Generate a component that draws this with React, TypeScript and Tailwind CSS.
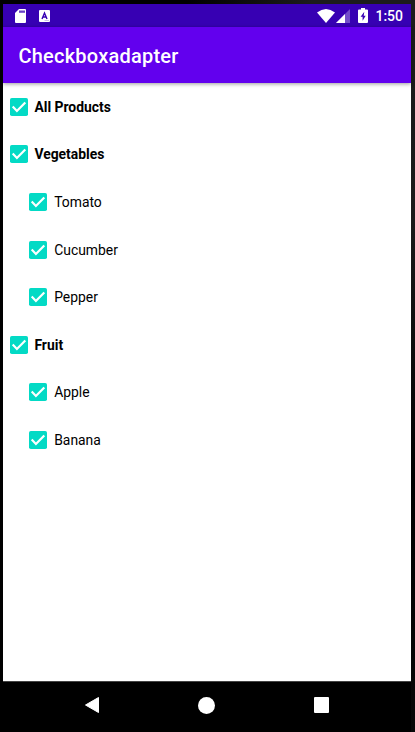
import React, { useState } from "react";

interface Item {
  id: number;
  label: string;
  level: "group" | "child";
}

const items: Item[] = [
  { id: 1, label: "All Products", level: "group" },
  { id: 2, label: "Vegetables", level: "group" },
  { id: 3, label: "Tomato", level: "child" },
  { id: 4, label: "Cucumber", level: "child" },
  { id: 5, label: "Pepper", level: "child" },
  { id: 6, label: "Fruit", level: "group" },
  { id: 7, label: "Apple", level: "child" },
  { id: 8, label: "Banana", level: "child" },
];

const StatusBar: React.FC = () => (
  <div className="flex h-[23px] shrink-0 items-center bg-[#3700b3] pl-3 pr-2 text-white">
    <svg width="11" height="14" viewBox="0 0 11 14" className="block">
      <path d="M4 0h6a1 1 0 0 1 1 1v12a1 1 0 0 1-1 1H1a1 1 0 0 1-1-1V4z" fill="currentColor" />
      <path d="M4 1.5h6v2.3H4z" fill="#3700b3" opacity="0.75" />
    </svg>
    <svg width="11" height="12" viewBox="0 0 11 12" className="ml-[13px] block">
      <rect width="11" height="12" rx="1" fill="currentColor" />
      <path d="M3 9l2.5-6L8 9M3.9 7h3.2" fill="none" stroke="#3700b3" strokeWidth="1.4" />
      <path d="M5.5 10.5h4.5" stroke="#3700b3" strokeWidth="0.7" opacity="0.35" />
    </svg>
    <svg width="18" height="14" viewBox="0 0 18 14" className="ml-auto block">
      <path d="M0 3.5Q9-3.5 18 3.5L9 14z" fill="currentColor" />
    </svg>
    <svg width="14" height="14" viewBox="0 0 14 14" className="ml-px block">
      <path d="M14 0v14H0z" fill="currentColor" opacity="0.3" />
      <path d="M9 5v9H0z" fill="currentColor" />
    </svg>
    <svg width="10" height="15" viewBox="0 0 10 15" className="ml-2 block">
      <path d="M3 1.5V0h4v1.5h2a1 1 0 0 1 1 1V14a1 1 0 0 1-1 1H1a1 1 0 0 1-1-1V2.5a1 1 0 0 1 1-1z" fill="currentColor" />
      <path d="M6.3 3.8L2.6 8.7h2v4L7.7 7.7H5.7z" fill="#3700b3" />
    </svg>
    <span className="ml-[7px] pt-px text-[14px] font-medium leading-none">1:50</span>
  </div>
);

interface CheckRowProps {
  item: Item;
  checked: boolean;
  onToggle: (id: number) => void;
}

const CheckRow: React.FC<CheckRowProps> = ({ item, checked, onToggle }) => (
  <label
    className={`flex h-[47.6px] items-center gap-[6.8px] ${
      item.level === "group" ? "pl-[6.6px] font-bold" : "pl-[26.4px]"
    }`}
  >
    <input
      type="checkbox"
      checked={checked}
      onChange={() => onToggle(item.id)}
      className="sr-only"
    />
    <svg width="18" height="18" viewBox="0 0 18 18" className="block shrink-0">
      {checked ? (
        <>
          <rect width="18" height="18" rx="1.8" fill="#03dac5" />
          <path d="M2.7 8.6L6.9 12.9L15.3 4.4" fill="none" stroke="white" strokeWidth="2.2" />
        </>
      ) : (
        <rect x="1" y="1" width="16" height="16" rx="1" fill="none" stroke="#757575" strokeWidth="2" />
      )}
    </svg>
    <span className="pt-[2px] text-[13.9px] leading-none text-black">{item.label}</span>
  </label>
);

const NavBar: React.FC = () => (
  <div className="flex h-12 shrink-0 items-center border-t border-[#444444] bg-black pb-px pl-[81px] text-white">
    <svg width="16" height="18" viewBox="0 0 16 18" className="block">
      <path d="M14.5 1.5v15L1.5 9z" fill="currentColor" stroke="currentColor" strokeWidth="1" strokeLinejoin="round" />
    </svg>
    <div className="ml-[98px] h-[17px] w-[17px] rounded-full bg-white" />
    <div className="ml-[99px] h-[16px] w-[15px] rounded-[1px] bg-white" />
  </div>
);

const App: React.FC = () => {
  const [selected, setSelected] = useState<number[]>(items.map((item) => item.id));

  const handleToggle = (id: number) => {
    setSelected((prev) =>
      prev.includes(id) ? prev.filter((value) => value !== id) : [...prev, id]
    );
  };

  return (
    <div className="flex h-[732px] w-[415px] flex-col overflow-hidden bg-black font-[Roboto,sans-serif]">
      {/* device bezel */}
      <div className="h-1 shrink-0 bg-[linear-gradient(to_right,#000_45%,#1c1c1c_75%)]" />
      <div className="flex flex-1 bg-[linear-gradient(to_bottom,#1c1c1c,#1a1a1a_30%,#000_65%,#080808)] bg-[length:4px_100%] bg-right bg-no-repeat pl-[3px] pr-1">
        <div className="flex h-[725px] w-full flex-col bg-white">
          <StatusBar />
          <header className="z-10 flex h-14 shrink-0 items-center bg-[#6200ee] pl-[15.5px] pt-0.5 shadow-[0_1px_4px_rgba(0,0,0,0.4)]">
            <h1 className="text-[20px] font-medium leading-none tracking-[0.22px] text-white">Checkboxadapter</h1>
          </header>
          <main className="flex-1">
            {items.map((item) => (
              <CheckRow
                key={item.id}
                item={item}
                checked={selected.includes(item.id)}
                onToggle={handleToggle}
              />
            ))}
          </main>
          <NavBar />
        </div>
      </div>
    </div>
  );
};

export default App;
